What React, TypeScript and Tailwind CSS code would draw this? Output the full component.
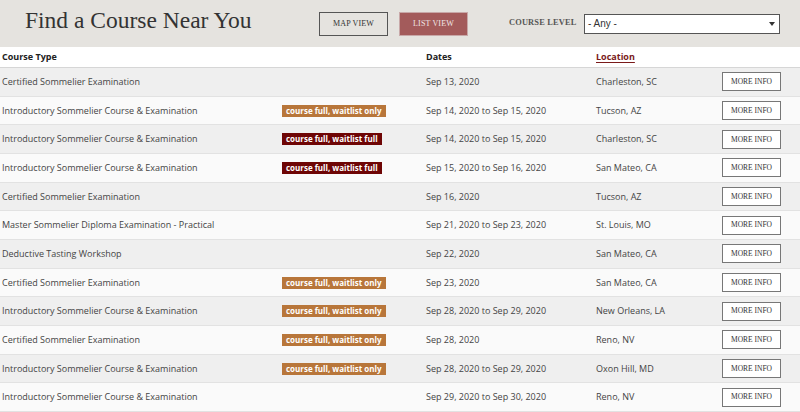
import React from "react";

type Row = { type: string; badge?: "only" | "full"; dates: string; loc: string };

const rows: Row[] = [
  { type: "Certified Sommelier Examination", dates: "Sep 13, 2020", loc: "Charleston, SC" },
  { type: "Introductory Sommelier Course & Examination", badge: "only", dates: "Sep 14, 2020 to Sep 15, 2020", loc: "Tucson, AZ" },
  { type: "Introductory Sommelier Course & Examination", badge: "full", dates: "Sep 14, 2020 to Sep 15, 2020", loc: "Charleston, SC" },
  { type: "Introductory Sommelier Course & Examination", badge: "full", dates: "Sep 15, 2020 to Sep 16, 2020", loc: "San Mateo, CA" },
  { type: "Certified Sommelier Examination", dates: "Sep 16, 2020", loc: "Tucson, AZ" },
  { type: "Master Sommelier Diploma Examination - Practical", dates: "Sep 21, 2020 to Sep 23, 2020", loc: "St. Louis, MO" },
  { type: "Deductive Tasting Workshop", dates: "Sep 22, 2020", loc: "San Mateo, CA" },
  { type: "Certified Sommelier Examination", badge: "only", dates: "Sep 23, 2020", loc: "San Mateo, CA" },
  { type: "Introductory Sommelier Course & Examination", badge: "only", dates: "Sep 28, 2020 to Sep 29, 2020", loc: "New Orleans, LA" },
  { type: "Certified Sommelier Examination", badge: "only", dates: "Sep 28, 2020", loc: "Reno, NV" },
  { type: "Introductory Sommelier Course & Examination", badge: "only", dates: "Sep 28, 2020 to Sep 29, 2020", loc: "Oxon Hill, MD" },
  { type: "Introductory Sommelier Course & Examination", dates: "Sep 29, 2020 to Sep 30, 2020", loc: "Reno, NV" },
];

export default function App() {
  return (
    <div className="w-[800px] h-[412px] overflow-hidden bg-white text-[#444] font-['Open_Sans',sans-serif]">
      <div className="h-[47px] bg-[#e5e3df] flex items-center">
        <h1 className="ml-[25px] w-[294px] text-[23.5px] leading-none text-[#333] font-['Liberation_Serif',serif] -mt-[5px]">
          Find a Course Near You
        </h1>
        <button className="w-[69px] h-[24px] border border-[#555] bg-transparent text-[8px] text-[#333] font-['Liberation_Serif',serif] tracking-[0.02em]">
          MAP VIEW
        </button>
        <button className="ml-[11px] w-[69px] h-[24px] bg-[#a35b5b] border border-[#c8a8a8] text-[8px] text-[#f1e6e6] font-['Liberation_Serif',serif] tracking-[0.02em]">
          LIST VIEW
        </button>
        <span className="ml-[41px] w-[75px] text-[8.4px] font-bold text-[#555] font-['Liberation_Serif',serif] tracking-[0.02em] whitespace-nowrap">
          COURSE LEVEL
        </span>
        <div className="w-[196px] h-[20px] bg-white border border-[#555] flex items-center justify-between px-[3px] text-[10px] text-[#333] font-['Liberation_Sans',sans-serif]">
          <span>- Any -</span>
          <svg width="6" height="4" viewBox="0 0 6 4" className="mr-[1px]">
            <path d="M0 0 H6 L3 4 Z" fill="#333" />
          </svg>
        </div>
      </div>
      <div className="h-[21px] flex items-center text-[9px] font-bold text-[#222] border-b border-[#d6d6d6]">
        <div className="w-[426px] pl-[2px]">Course Type</div>
        <div className="w-[170px]">Dates</div>
        <div className="text-[#7a1a1a] underline underline-offset-2">Location</div>
      </div>
      {rows.map((r, i) => (
        <div
          key={i}
          className={`h-[28.67px] flex items-center text-[9px] border-b border-[#e2e2e2] ${i % 2 === 0 ? "bg-[#efefef]" : "bg-[#fafafa]"}`}
        >
          <div className="w-[282px] pl-[2px] whitespace-nowrap">{r.type}</div>
          <div className="w-[144px]">
            {r.badge === "only" && (
              <span className="inline-block h-[12px] leading-[12px] px-[4px] bg-[#b8763a] text-white text-[8px] font-bold">
                course full, waitlist only
              </span>
            )}
            {r.badge === "full" && (
              <span className="inline-block h-[12px] leading-[12px] px-[4px] bg-[#6e0505] text-white text-[8px] font-bold">
                course full, waitlist full
              </span>
            )}
          </div>
          <div className="w-[170px] whitespace-nowrap">{r.dates}</div>
          <div className="w-[126px] whitespace-nowrap">{r.loc}</div>
          <button className="w-[59px] h-[19px] bg-white border border-[#777] text-[7.5px] text-[#333] font-['Liberation_Serif',serif]">
            MORE INFO
          </button>
        </div>
      ))}
    </div>
  );
}
